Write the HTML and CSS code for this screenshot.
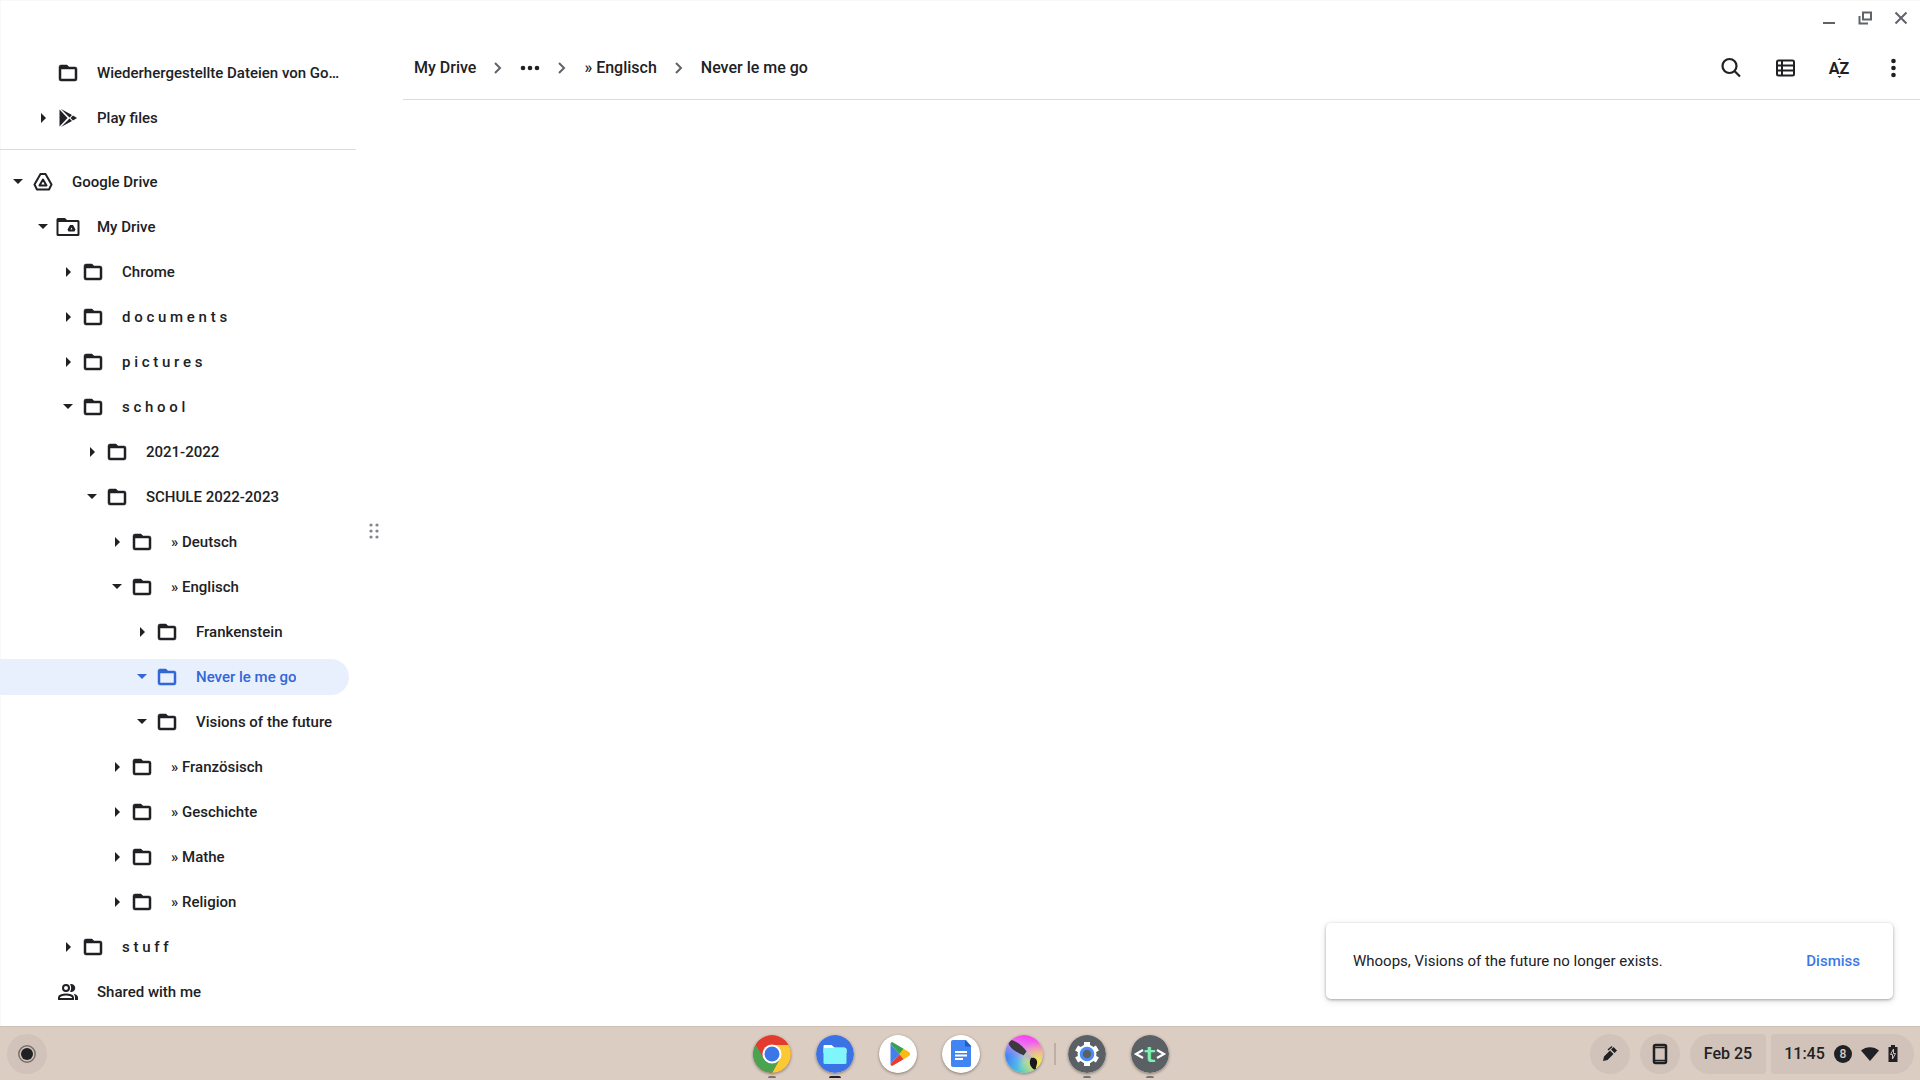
FILE: index.html
```html
<!DOCTYPE html>
<html lang="en">
    <head>
        <meta charset="utf-8">
        <title>Files</title>
        <link rel="stylesheet" href="styles.css">
    </head>
<body>
    <svg class="sprite" aria-hidden="true">
        <symbol id="folder" viewBox="0 0 24 24">
            <path fill-rule="evenodd" stroke="currentColor" stroke-width="0.500" d="M5 4h6l2 2h6a2 2 0 0 1 2 2v10a2 2 0 0 1-2 2H5a2 2 0 0 1-2-2V6a2 2 0 0 1 2-2zm0 4v10h14V8z"/>
        </symbol>
        <symbol id="open" viewBox="0 0 24 24">
            <path d="M7 9h10l-5 5z"/>
        </symbol>
        <symbol id="closed" viewBox="0 0 24 24">
            <path d="M10 7v10l5-5z"/>
        </symbol>
        <symbol id="chevron" viewBox="0 0 18 18">
            <path d="M6 4l5 5-5 5" fill="none" stroke="#5f6368" stroke-width="2"/>
        </symbol>
    </svg>

    <div class="window">
        <nav class="sidebar" aria-label="Folders">
            <ul class="tree">
                <li class="row level1"><span class="toggle"></span><svg class="icon"><use href="#folder"/></svg><a href="#">Wiederhergestellte Dateien von Go…</a></li>
                <li class="row level1">
                    <button class="toggle" aria-label="Expand"><svg><use href="#closed"/></svg></button>
                    <svg class="icon" viewBox="0 0 24 24">
                        <path d="M3.500 3.500v17l8-8.500z"/>
                        <path d="M5 3l11 6-2.500 2.500zM5 21l11-6-2.500-2.500z"/>
                        <path d="M17 9.500l4 2.500-4 2.500-2.500-2.500z"/>
                    </svg>
                    <a href="#">Play files</a>
                </li>
            </ul>
            <hr>
            <ul class="tree">
                <li class="row level0">
                    <button class="toggle" aria-label="Collapse"><svg><use href="#open"/></svg></button>
                    <svg class="icon line" viewBox="0 0 24 24">
                        <path d="M9.500 4h5l6 10.500-2.500 5H6l-2.500-5z"/>
                        <path d="M12 9.500l3.500 6h-7z"/>
                    </svg>
                    <a href="#">Google Drive</a>
                </li>
                <li class="row level1">
                    <button class="toggle" aria-label="Collapse"><svg><use href="#open"/></svg></button>
                    <svg class="icon" viewBox="0 0 24 24">
                        <path fill-rule="evenodd" d="M2 3h7l2 2h11a1.500 1.500 0 0 1 1.500 1.500v13A1.500 1.500 0 0 1 22 21H2a1.500 1.500 0 0 1-1.500-1.500v-15A1.500 1.500 0 0 1 2 3zm.5 4v12h19V7z"/>
                        <path fill-rule="evenodd" d="M14 10h3l2.500 4.500-1 2h-6l-1-2zm1.500 2.500l-1 2h2z"/>
                    </svg>
                    <a href="#">My Drive</a>
                </li>
                <li class="row level2"><button class="toggle" aria-label="Expand"><svg><use href="#closed"/></svg></button><svg class="icon"><use href="#folder"/></svg><a href="#">Chrome</a></li>
                <li class="row level2"><button class="toggle" aria-label="Expand"><svg><use href="#closed"/></svg></button><svg class="icon"><use href="#folder"/></svg><a href="#">d o c u m e n t s</a></li>
                <li class="row level2"><button class="toggle" aria-label="Expand"><svg><use href="#closed"/></svg></button><svg class="icon"><use href="#folder"/></svg><a href="#">p i c t u r e s</a></li>
                <li class="row level2"><button class="toggle" aria-label="Collapse"><svg><use href="#open"/></svg></button><svg class="icon"><use href="#folder"/></svg><a href="#">s c h o o l</a></li>
                <li class="row level3"><button class="toggle" aria-label="Expand"><svg><use href="#closed"/></svg></button><svg class="icon"><use href="#folder"/></svg><a href="#">2021-2022</a></li>
                <li class="row level3"><button class="toggle" aria-label="Collapse"><svg><use href="#open"/></svg></button><svg class="icon"><use href="#folder"/></svg><a href="#">SCHULE 2022-2023</a></li>
                <li class="row level4"><button class="toggle" aria-label="Expand"><svg><use href="#closed"/></svg></button><svg class="icon"><use href="#folder"/></svg><a href="#">» Deutsch</a></li>
                <li class="row level4"><button class="toggle" aria-label="Collapse"><svg><use href="#open"/></svg></button><svg class="icon"><use href="#folder"/></svg><a href="#">» Englisch</a></li>
                <li class="row level5"><button class="toggle" aria-label="Expand"><svg><use href="#closed"/></svg></button><svg class="icon"><use href="#folder"/></svg><a href="#">Frankenstein</a></li>
                <li class="row level5 selected"><button class="toggle" aria-label="Collapse"><svg><use href="#open"/></svg></button><svg class="icon"><use href="#folder"/></svg><a href="#">Never le me go</a></li>
                <li class="row level5"><button class="toggle" aria-label="Collapse"><svg><use href="#open"/></svg></button><svg class="icon"><use href="#folder"/></svg><a href="#">Visions of the future</a></li>
                <li class="row level4"><button class="toggle" aria-label="Expand"><svg><use href="#closed"/></svg></button><svg class="icon"><use href="#folder"/></svg><a href="#">» Französisch</a></li>
                <li class="row level4"><button class="toggle" aria-label="Expand"><svg><use href="#closed"/></svg></button><svg class="icon"><use href="#folder"/></svg><a href="#">» Geschichte</a></li>
                <li class="row level4"><button class="toggle" aria-label="Expand"><svg><use href="#closed"/></svg></button><svg class="icon"><use href="#folder"/></svg><a href="#">» Mathe</a></li>
                <li class="row level4"><button class="toggle" aria-label="Expand"><svg><use href="#closed"/></svg></button><svg class="icon"><use href="#folder"/></svg><a href="#">» Religion</a></li>
                <li class="row level2"><button class="toggle" aria-label="Expand"><svg><use href="#closed"/></svg></button><svg class="icon"><use href="#folder"/></svg><a href="#">s t u f f</a></li>
                <li class="row level1">
                    <span class="toggle"></span>
                    <svg class="icon" viewBox="0 0 24 24">
                        <circle cx="10" cy="8" r="3" fill="none" stroke="currentColor" stroke-width="2"/>
                        <path d="M3 19v-1.500c0-2 4-3 7-3s7 1 7 3V19z" fill="none" stroke="currentColor" stroke-width="2"/>
                        <path d="M14 4.200a4 4 0 1 1 0 7.600c1.600-2.200 1.600-5.400 0-7.600zM17.500 13.800c2.500.6 4.500 1.800 4.500 3.700V20h-3v-2.500c0-1.500-.5-2.700-1.500-3.700z"/>
                    </svg>
                    <a href="#">Shared with me</a>
                </li>
            </ul>
        </nav>

        <div class="splitter">
            <svg width="12" height="16" viewBox="0 0 12 16">
                <circle cx="3" cy="2" r="1.600"/><circle cx="9" cy="2" r="1.600"/>
                <circle cx="3" cy="8" r="1.600"/><circle cx="9" cy="8" r="1.600"/>
                <circle cx="3" cy="14" r="1.600"/><circle cx="9" cy="14" r="1.600"/>
            </svg>
        </div>

        <main class="content">
            <div class="titlebar">
                <button aria-label="Minimize"><svg viewBox="0 0 36 36"><path d="M12 23h12"/></svg></button>
                <button aria-label="Restore"><svg viewBox="0 0 36 36"><path d="M16 12.500h8v7h-8zM12.500 16v7.500H21"/></svg></button>
                <button aria-label="Close"><svg viewBox="0 0 36 36"><path d="M12.500 12.500l11 11m0-11l-11 11"/></svg></button>
            </div>
            <header class="toolbar">
                <nav class="crumbs" aria-label="Path">
                    <a href="#">My Drive</a>
                    <svg class="chevron"><use href="#chevron"/></svg>
                    <button class="more" aria-label="More folders"><svg width="20" height="18" viewBox="0 0 20 18"><circle cx="3" cy="9" r="2.300"/><circle cx="10" cy="9" r="2.300"/><circle cx="17" cy="9" r="2.300"/></svg></button>
                    <svg class="chevron"><use href="#chevron"/></svg>
                    <a href="#">» Englisch</a>
                    <svg class="chevron"><use href="#chevron"/></svg>
                    <a href="#">Never le me go</a>
                </nav>
                <div class="actions">
                    <button aria-label="Search"><svg viewBox="0 0 24 24"><g fill="none" stroke="currentColor" stroke-width="2.200"><circle cx="10.500" cy="10" r="7"/><path d="M15.500 15l5.500 5.500"/></g></svg></button>
                    <button aria-label="Switch to thumbnail view"><svg viewBox="0 0 24 24"><g fill="none" stroke="currentColor" stroke-width="2"><rect x="4" y="4.500" width="17" height="15" rx="1.500"/><path d="M9 4.500v15M4 9.500h17M4 14.500h17"/></g></svg></button>
                    <button aria-label="Sort options"><svg viewBox="0 0 24 24"><text x="12" y="18" text-anchor="middle">AZ</text><path d="M10.500 4l2-2 2 2zM10.500 20l2 2 2-2z"/></svg></button>
                    <button aria-label="More"><svg viewBox="0 0 24 24"><circle cx="12.500" cy="5" r="2.300"/><circle cx="12.500" cy="12" r="2.300"/><circle cx="12.500" cy="19" r="2.300"/></svg></button>
                </div>
            </header>
            <div class="toast" role="alert">
                <span>Whoops, Visions of the future no longer exists.</span>
                <button>Dismiss</button>
            </div>
        </main>
    </div>

    <footer class="shelf">
        <button class="round" aria-label="Launcher">
            <svg width="20" height="20" viewBox="0 0 20 20"><circle cx="10" cy="10" r="8.200" fill="none" stroke="#77706a" stroke-width="1.500"/><circle cx="10" cy="10" r="6"/></svg>
        </button>

        <div class="apps">
            <button class="app running" aria-label="Chrome">
                <svg viewBox="0 0 38 38">
                    <circle cx="19" cy="19" r="19" fill="#e33b2e"/>
                    <path d="M19 10h16.700A19 19 0 0 1 19 38l8-14.500z" fill="#fbc934"/>
                    <path d="M2.500 9.500A19 19 0 0 0 19 38l8-14.500-16 0z" fill="#4ba350"/>
                    <circle cx="19" cy="19" r="9.500" fill="#fff"/>
                    <circle cx="19" cy="19" r="7.500" fill="#3b77e8"/>
                </svg>
            </button>
            <button class="app running current" aria-label="Files">
                <svg viewBox="0 0 38 38">
                    <circle cx="19" cy="19" r="19" fill="#3b72e5"/>
                    <path d="M8.500 10h7l3 2.500H28a2.500 2.500 0 0 1 2.500 2.500v3h-23v-7a1 1 0 0 1 1-1z" fill="#fff"/>
                    <rect x="7.500" y="13" width="23" height="16" rx="1.500" fill="#80f5fb"/>
                </svg>
            </button>
            <button class="app" aria-label="Play Store">
                <svg viewBox="0 0 38 38">
                    <circle cx="19" cy="19" r="19" fill="#fff"/>
                    <path d="M11.500 9v20l9-10z" fill="#4280ef"/>
                    <path d="M11.500 9c0-1.800 1.500-2 2.500-1.500L25 14l-4.500 5z" fill="#34a250"/>
                    <path d="M11.500 29c0 1.800 1.500 2 2.500 1.500L25 24l-4.500-5z" fill="#e43e2f"/>
                    <path d="M24.500 13.700L30 17c1.500 1 1.500 3 0 4l-5.500 3.300L20.500 19z" fill="#f9bb12"/>
                </svg>
            </button>
            <button class="app" aria-label="Docs">
                <svg viewBox="0 0 38 38">
                    <circle cx="19" cy="19" r="19" fill="#fff"/>
                    <path d="M11 5h13l5 6v19a2 2 0 0 1-2 2H11a2 2 0 0 1-2-2V7a2 2 0 0 1 2-2z" fill="#4384f3"/>
                    <path d="M23 5l6.500 6.500H23z" fill="#1d5fc9"/>
                    <path d="M13 17h12M13 20.500h12M13 24h8" stroke="#fff" stroke-width="1.800"/>
                </svg>
            </button>
            <button class="app" aria-label="Krita">
                <svg viewBox="0 0 38 38">
                    <defs>
                        <linearGradient id="paint" x1="0.6" y1="0" x2="0.4" y2="1"><stop offset="0" stop-color="#ff3df2"/><stop offset="0.4" stop-color="#dd8cf0"/><stop offset="0.7" stop-color="#6ccdf0"/><stop offset="1" stop-color="#38c4dc"/></linearGradient>
                        <radialGradient id="glow" cx="0.9" cy="0.75" r="0.6"><stop offset="0" stop-color="#ffe83a"/><stop offset="1" stop-color="#ffe83a" stop-opacity="0"/></radialGradient>
                        <radialGradient id="sky" cx="0" cy="0.6" r="0.5"><stop offset="0" stop-color="#3a7df5"/><stop offset="1" stop-color="#3a7df5" stop-opacity="0"/></radialGradient>
                    </defs>
                    <circle cx="19" cy="19" r="19" fill="url(#paint)"/>
                    <circle cx="19" cy="19" r="19" fill="url(#glow)"/>
                    <circle cx="19" cy="19" r="19" fill="url(#sky)"/>
                    <path d="M3.500 8l3-3c5 1 12 7 15 11.500L19 20.500C13 18 5 14 3.500 8z" fill="#3c3a3d"/>
                    <path d="M21.500 17l5.500 5-2.500 3-6-4.500z" fill="#b9bac3"/>
                    <path d="M26 23c4-1 7 2 6 6-.5 2-1.500 3-1 6-5-1-8-7-5-12z" fill="#1b191b"/>
                </svg>
            </button>
            <span class="separator"></span>
            <button class="app running" aria-label="Settings">
                <svg viewBox="0 0 38 38">
                    <circle cx="19" cy="19" r="19" fill="#5b6064"/>
                    <circle cx="19" cy="19" r="9.500" fill="#fff"/>
                    <path d="M19 7v24M8.600 13l20.800 12M8.600 25l20.800-12" stroke="#fff" stroke-width="6"/>
                    <circle cx="19" cy="19" r="5.800" fill="#5b6064" stroke="#4a8cf6" stroke-width="3"/>
                </svg>
            </button>
            <button class="app running" aria-label="Text editor">
                <svg viewBox="0 0 38 38">
                    <circle cx="19" cy="19" r="19" fill="#5b6064"/>
                    <path d="M12 15L5 19l7 4M26 15l7 4-7 4" fill="none" stroke="#fff" stroke-width="2.200"/>
                    <text class="letter" x="19" y="27" text-anchor="middle">t</text>
                </svg>
            </button>
        </div>

        <div class="tray">
            <button class="round" aria-label="Stylus tools">
                <svg width="18" height="18" viewBox="0 0 18 18"><path d="M2 16l1-4.500 6-6 3.500 3.500-6 6zM10 4.500L12.500 2 16 5.500 13.500 8z"/><path d="M7 5l4-3.500" stroke="currentColor" stroke-width="1.500"/></svg>
            </button>
            <button class="round" aria-label="Phone hub">
                <svg width="16" height="22" viewBox="0 0 16 22"><rect x="2" y="2" width="12" height="18" rx="1.500" fill="none" stroke="currentColor" stroke-width="2.500"/><path d="M2 4.500h12M2 17.500h12" stroke="currentColor" stroke-width="1.500"/></svg>
            </button>
            <button class="date">Feb 25</button>
            <button class="status">
                <span>11:45</span>
                <span class="badge">8</span>
                <svg width="18" height="14" viewBox="0 0 18 14"><path d="M0 3.500C5-1 13-1 18 3.500L9 14z"/></svg>
                <svg width="10" height="17" viewBox="0 0 10 17"><path d="M3 0h4v2h2.500v15h-9V2H3z"/><path d="M5.500 4L2.500 9.500h2v4.500l3-5.500h-2z" fill="none" stroke="#d1c3ba"/></svg>
            </button>
        </div>
    </footer>
</body>
</html>
```
FILE: styles.css
```css
* {
    box-sizing: border-box;
}

body {
    margin: 0;
    height: 100vh;
    display: flex;
    flex-direction: column;
    font-family: Roboto, "Liberation Sans", sans-serif;
    font-size: 15px;
    font-weight: 500;
    line-height: 20px;
    color: #202124;
    background: #fff;
}

button {
    padding: 0;
    border: none;
    background: none;
    font: inherit;
    color: inherit;
    display: flex;
    align-items: center;
    justify-content: center;
}

a {
    color: inherit;
    text-decoration: none;
}

svg {
    fill: currentColor;
    flex: none;
}

.sprite {
    display: none;
}

.window {
    flex: 1;
    min-height: 0;
    display: flex;
    box-shadow: inset 1px 1px #f8f8f8;
}

/* folder tree */
.sidebar {
    width: 356px;
    flex: none;
    padding-top: 55px;
    overflow: hidden;
}

.sidebar hr {
    margin: 13px 0 14px;
    border: none;
    border-top: 1px solid #dadce0;
}

.tree {
    margin: 0;
    padding: 0;
    list-style: none;
    display: flex;
    flex-direction: column;
    gap: 9px;
}

.row {
    height: 36px;
    margin-right: 7px;
    padding-right: 6px;
    display: flex;
    align-items: center;
    border-radius: 0 18px 18px 0;
}

.row a {
    margin-left: 17px;
    white-space: nowrap;
    overflow: hidden;
    text-overflow: ellipsis;
}

.toggle {
    width: 25px;
    flex: none;
    justify-content: flex-start;
}

.toggle svg,
.icon {
    width: 24px;
    height: 24px;
}

.line {
    fill: none;
    stroke: currentColor;
    stroke-width: 2;
    stroke-linejoin: round;
}

.level0 { padding-left: 6px; }
.level1 { padding-left: 31px; }
.level2 { padding-left: 56px; }
.level3 { padding-left: 80px; }
.level4 { padding-left: 105px; }
.level5 { padding-left: 130px; }

.selected {
    color: #3367d6;
    background: #e8f0fe;
}

.splitter {
    width: 47px;
    flex: none;
    display: flex;
    align-items: center;
    padding: 36px 0 0 12px;
    color: #80868b;
}

/* right pane */
.content {
    flex: 1;
    min-width: 0;
    position: relative;
}

.titlebar {
    height: 36px;
    padding-right: 1px;
    display: flex;
    justify-content: flex-end;
}

.titlebar button {
    width: 36px;
}

.titlebar svg {
    width: 36px;
    height: 36px;
    fill: none;
    stroke: #5f6368;
    stroke-width: 2;
}

.toolbar {
    height: 64px;
    display: flex;
    justify-content: space-between;
    align-items: center;
    border-bottom: 1px solid #dadce0;
}

.crumbs {
    display: flex;
    align-items: center;
    gap: 13px;
    padding-left: 11px;
    font-size: 16px;
}

.chevron {
    width: 18px;
    height: 18px;
}

.actions {
    display: flex;
}

.actions button {
    width: 54px;
    height: 54px;
}

.actions svg {
    width: 24px;
    height: 24px;
}

.actions text {
    font-size: 16px;
    font-weight: 700;
}

.toast {
    position: absolute;
    right: 27px;
    bottom: 27px;
    width: 567px;
    height: 76px;
    padding: 0 33px 0 27px;
    display: flex;
    align-items: center;
    justify-content: space-between;
    border-radius: 5px;
    background: #fff;
    font-weight: 400;
    box-shadow: 0 1px 3px rgba(60, 64, 67, 0.4), 0 2px 7px rgba(60, 64, 67, 0.15);
}

.toast button {
    font-weight: 500;
    color: #3b78e7;
}

/* shelf */
.shelf {
    height: 54px;
    flex: none;
    padding: 0 6px 0 7px;
    display: grid;
    grid-template-columns: 1fr auto 1fr;
    align-items: center;
    border-top: 1px solid #cfc0b8;
    background: #dbcdc2;
}

.round {
    width: 40px;
    height: 40px;
    border-radius: 50%;
    background: #d1c3ba;
}

.apps {
    display: flex;
    align-items: center;
}

.app {
    position: relative;
    width: 63px;
    height: 53px;
}

.app svg {
    width: 38px;
    height: 38px;
    border-radius: 50%;
    box-shadow: 0 1px 3px rgba(0, 0, 0, 0.4);
}

.running::after {
    content: "";
    position: absolute;
    bottom: 2px;
    left: 50%;
    width: 8px;
    height: 2px;
    margin-left: -4px;
    border-radius: 2px 2px 0 0;
    background: #7d736d;
}

.current::after {
    width: 12px;
    margin-left: -6px;
    background: #202124;
}

.letter {
    font-family: "DejaVu Sans Mono", monospace;
    font-size: 22px;
    font-weight: 700;
    fill: #7df0b5;
}

.separator {
    width: 2px;
    height: 22px;
    margin: 0 -1px;
    background: #bdafa6;
}

.tray {
    display: flex;
    justify-content: flex-end;
    font-size: 16px;
}

.tray .round {
    margin-right: 10px;
}

.date,
.status {
    height: 40px;
    background: #d1c3ba;
}

.date {
    width: 76px;
    margin-right: 5px;
    border-radius: 20px 4px 4px 20px;
}

.status {
    width: 143px;
    padding-right: 3px;
    gap: 9px;
    border-radius: 4px 20px 20px 4px;
}

.badge {
    width: 18px;
    height: 18px;
    border-radius: 50%;
    background: #202124;
    color: #dbcdc2;
    font-size: 12px;
    line-height: 18px;
}
```
